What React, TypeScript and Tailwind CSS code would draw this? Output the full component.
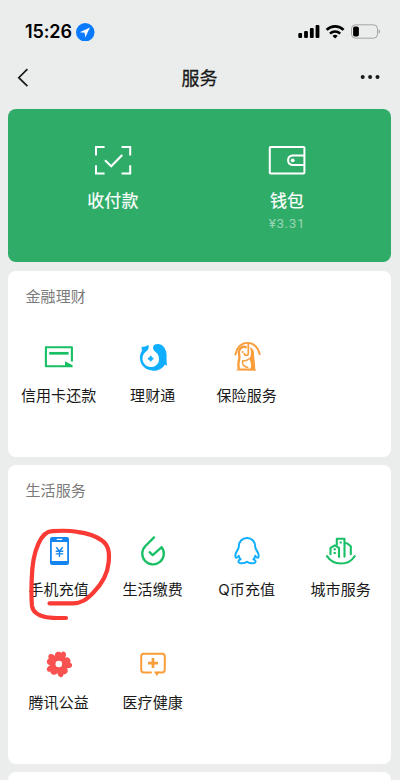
import React from "react";

type IconProps = { children: React.ReactNode };

type Service = {
  name: string;
  icon: React.ReactNode;
};

const Icon = ({ children }: IconProps) => (
  <svg className="block w-9 h-9" viewBox="0 0 36 36" fill="none">
    {children}
  </svg>
);

const CardIcon = () => (
  <Icon>
    <path d="M22 27.2H4.9V8.2H30.9V22.5" stroke="#18bf65" strokeWidth="2.1" strokeLinejoin="round" />
    <path d="M8.2 14.3H27.6" stroke="#18bf65" strokeWidth="2.7" />
    <path d="M24 22.2L31.6 26.2V28.2H21.5V26.2H24Z" fill="#18bf65" />
  </Icon>
);

const WealthIcon = () => (
  <Icon>
    <path
      d="M18.2 7.2C19.6 4.6 24.5 4.4 27.3 6.6C30.6 9.3 32 14 31.6 18.5C31.4 21.8 31.6 24 32.2 26.8L29.9 25.4C27.6 29.4 23.3 31.7 18.4 31.7C10.6 31.7 4.8 26 4.9 18.6C5 16 5.8 13.5 7.2 11.3C6.7 10.2 6.4 9 6.7 7.7C9 7.9 11.2 7.4 13.4 5.7C14.1 8.2 13.6 10.4 11.9 11.8C9.4 13.7 7.5 16 7.5 19.6C7.5 24.4 11 28 15.7 28C20.6 28 24 24.8 24 20.2C24 17.5 23.2 15.2 21.1 13.6C19.2 12 17.4 10 18.2 7.2Z"
      fill="#10aeff"
    />
    <path d="M15.7 17.9V21.5M13.9 19.7H17.5" stroke="#10aeff" strokeWidth="2.2" strokeLinecap="round" />
  </Icon>
);

const InsuranceIcon = () => (
  <Icon>
    <path d="M6.4 15.6C7.6 8.4 12.3 3.9 18.5 3.9C24.6 3.9 29.4 8.4 30.7 15.2" stroke="#fa9d3b" strokeWidth="1.9" strokeLinecap="round" />
    <path d="M17.7 8.3C13.2 6.7 9.9 9.4 9.9 13.6C9.9 16 11 17 10.2 20C9.3 23 9.1 26.4 9.7 30" stroke="#fa9d3b" strokeWidth="2.4" />
    <path d="M19.3 4.5V14.5C19.3 17 15.4 17 15.4 14.5" stroke="#fa9d3b" strokeWidth="1.7" strokeLinecap="round" />
    <path d="M20.6 8C23.8 9.2 25.4 12 25.1 15.3C24.8 18.6 26.4 22 26.2 30.4H21.3C22.5 27 22.1 22.7 20.2 19.8C22.5 16.5 22.6 12 20.6 8Z" fill="#fa9d3b" />
    <path d="M21.8 18.8C18.7 21.4 16.2 22.4 13.7 21.8C12.7 25.2 14.8 28.2 19.3 28.4" stroke="#fa9d3b" strokeWidth="1.5" />
    <path d="M7.2 31.6C8.5 29.2 11.5 29.4 13.3 29.6H23.5C25.2 29.1 26.6 29.8 27 31.7Z" fill="#fa9d3b" />
    <circle cx="13.6" cy="12.9" r="1" fill="#fa9d3b" />
  </Icon>
);

const PhoneIcon = () => (
  <Icon>
    <rect x="9" y="4" width="19" height="28" rx="2.2" fill="#1485ee" />
    <rect x="10.8" y="9" width="15.4" height="19" fill="#fff" />
    <path d="M16.2 6.4H20.8" stroke="#fff" strokeWidth="1.1" strokeLinecap="round" />
    <path d="M15.3 14.2L18.5 18.2L21.7 14.2M14.7 18.3H22.3M14.7 20.9H22.3M18.5 18V24" stroke="#1485ee" strokeWidth="1.4" />
  </Icon>
);

const BillIcon = () => (
  <Icon>
    <path
      d="M19 4.4L10.2 13.2A10.8 10.8 0 1 0 26.7 14.2L17.7 22.1L14.6 19.2"
      stroke="#18bf65"
      strokeWidth="2.3"
      strokeLinecap="round"
      strokeLinejoin="round"
    />
  </Icon>
);

const QCoinIcon = () => (
  <Icon>
    <path
      d="M18 5.1C13 5.1 9.8 8.7 9.8 13.4C9.8 15 9.2 16 8.3 17.4C6.4 20.4 5.9 23.2 6.9 24.7C7.8 25.1 8.8 24.3 9.8 22.8C9.9 24.3 10.7 25.5 11.6 26.3C9.9 26.9 9.2 27.8 9.5 28.8C10.3 30.8 15.6 30.8 18 28.8C20.4 30.8 25.7 30.8 26.5 28.8C26.8 27.8 26.1 26.9 24.4 26.3C25.3 25.5 26.1 24.3 26.2 22.8C27.2 24.3 28.2 25.1 29.1 24.7C30.1 23.2 29.6 20.4 27.7 17.4C26.8 16 26.2 15 26.2 13.4C26.2 8.7 23 5.1 18 5.1Z"
      stroke="#10aeff"
      strokeWidth="2"
      strokeLinejoin="round"
    />
  </Icon>
);

const CityIcon = () => (
  <Icon>
    <g stroke="#18bf65" strokeWidth="2.1" strokeLinecap="round" strokeLinejoin="round">
      <path d="M4 23.2C10.5 33 25.3 33 31.7 23.2" />
      <path d="M7.5 21.3V14.8L11.8 12.4L16 14.8V24" />
      <path d="M13.8 11.8V5.8H21.5V23.6" />
      <path d="M21.8 10.2H24L27.8 13.2V21.2" />
    </g>
    <path d="M10.6 15.3H12.8V17.3H10.6ZM10.6 19H12.8V21H10.6ZM16.6 8.5H18.8V10.5H16.6Z" fill="#18bf65" />
  </Icon>
);

const petals = [-4, 68, 140, 212, 284];

const CharityIcon = () => (
  <Icon>
    {petals.map((angle) => (
      <path
        key={angle}
        d="M17.8 18L22.4 14C24 11.8 26.8 11.2 28.6 12.9C30 14.3 29.9 16.4 29.2 17.8C30.9 18.1 31.3 19.6 30.8 21C29.9 23.2 26.2 23.6 22.6 21.8Z"
        fill="#fa5151"
        transform={`rotate(${angle} 17.8 18)`}
      />
    ))}
    <circle cx="17.8" cy="18" r="3.3" fill="#fff" />
  </Icon>
);

const HealthIcon = () => (
  <Icon>
    <path
      d="M16.8 26.4H8.8C7.2 26.4 6.2 25.4 6.2 23.8V10.4C6.2 8.8 7.2 7.8 8.8 7.8H27.2C28.8 7.8 29.8 8.8 29.8 10.4V23.8C29.8 25.4 28.8 26.4 27.2 26.4H23"
      stroke="#fa9d3b"
      strokeWidth="2"
    />
    <path d="M18.8 25.4H24.2L22 30.2Z" fill="#fa9d3b" />
    <path d="M18 12.1V22.1M13 17.1H23" stroke="#fa9d3b" strokeWidth="2.7" />
  </Icon>
);

const finance: Service[] = [
  { name: "信用卡还款", icon: <CardIcon /> },
  { name: "理财通", icon: <WealthIcon /> },
  { name: "保险服务", icon: <InsuranceIcon /> },
];

const life: Service[] = [
  { name: "手机充值", icon: <PhoneIcon /> },
  { name: "生活缴费", icon: <BillIcon /> },
  { name: "Q币充值", icon: <QCoinIcon /> },
  { name: "城市服务", icon: <CityIcon /> },
  { name: "腾讯公益", icon: <CharityIcon /> },
  { name: "医疗健康", icon: <HealthIcon /> },
];

const StatusBar = () => (
  <div className="h-[62px] pt-0.5 pl-[25px] pr-5 flex items-center justify-between">
    <div className="flex items-center gap-1">
      <span className="font-[Inter,sans-serif] text-[18px] font-semibold leading-none text-black w-[47px] tracking-[-0.1px]">
        15:26
      </span>
      <svg className="w-[18.5px] h-[18.5px]" viewBox="0 0 18 18">
        <circle cx="9" cy="9" r="9" fill="#0a7aff" />
        <path d="M13.6 4.4L3.7 9L8.4 9.6L9 14.2Z" fill="#fff" />
      </svg>
    </div>
    <svg className="w-[83px] h-5 -translate-y-px" viewBox="0 0 83 20">
      <rect x="1.3" y="12" width="3.8" height="5" rx="1" />
      <rect x="7.1" y="10" width="3.8" height="7" rx="1" />
      <rect x="12.9" y="7" width="3.8" height="10" rx="1" />
      <rect x="18.6" y="4" width="3.8" height="13" rx="1" />
      <g fill="none" stroke="#000" strokeWidth="2.6">
        <path d="M29.6 8.9C34.4 4.2 41.8 4.2 46.6 8.9" />
        <path d="M33 12.6C35.9 9.8 40.3 9.8 43.2 12.6" />
      </g>
      <path d="M35.5 14.9C37.1 13.5 39.1 13.5 40.7 14.9L38.1 17.4Z" />
      <rect x="54.5" y="3.8" width="26" height="13.4" rx="4" fill="none" stroke="#a3a5a4" />
      <rect x="56.1" y="5.5" width="5.8" height="10" rx="1.8" />
      <path d="M81.7 8.5C83.2 9.2 83.2 11.8 81.7 12.5Z" fill="#8e908f" />
    </svg>
  </div>
);

const Header = () => (
  <div className="h-[47px] pb-[17px] px-[17px] grid grid-cols-3 items-center">
    <svg className="w-3 h-[19px]" viewBox="0 0 12 19" fill="none">
      <path d="M10.4 1.2L1.8 9.7L10.4 18.2" stroke="#191919" strokeWidth="1.7" />
    </svg>
    <h1 className="-ml-px pt-[3px] text-center text-[18px] leading-none font-normal text-[#191919] [-webkit-text-stroke:0.3px_#191919]">
      服务
    </h1>
    <svg className="w-5 h-4 justify-self-end mr-[3px]" viewBox="0 0 20 4" fill="#191919">
      <circle cx="2.7" cy="2" r="2" />
      <circle cx="10.1" cy="2" r="2" />
      <circle cx="17.5" cy="2" r="2" />
    </svg>
  </div>
);

const PayCard = () => (
  <div className="h-[153px] rounded-lg bg-[#2eac68] px-[18px] grid grid-cols-2 text-white text-[17px]">
    <div className="flex flex-col items-center pt-[31px]">
      <svg className="w-10 h-10" viewBox="0 0 40 40" fill="none" stroke="#fff" strokeWidth="2">
        <path d="M11.6 7H3V15.4M28.6 7H37.2V15.4M11.6 33.6H3V25.2M28.6 33.6H37.2V25.2" />
        <path d="M12 20.2L18.2 26.3L29.2 14.9" strokeWidth="2.1" />
      </svg>
      <span className="mt-[9px] leading-[25px] tracking-[0.2px] [-webkit-text-stroke:0.2px_#fff]">收付款</span>
    </div>
    <div className="flex flex-col items-center pt-[31px] pl-px">
      <svg className="w-10 h-10" viewBox="0 0 40 40" fill="none" stroke="#fff" strokeWidth="2">
        <rect x="2.8" y="7" width="34.6" height="26.6" rx="0.8" />
        <path d="M37 15.6H25.2A4.8 4.8 0 0 0 25.2 25.1H37" />
        <circle cx="25.7" cy="20.3" r="1.9" fill="#fff" stroke="none" />
      </svg>
      <span className="mt-[9px] leading-[25px] [-webkit-text-stroke:0.2px_#fff]">钱包</span>
      <span className="font-[Roboto,sans-serif] text-[13.5px] leading-[19px] tracking-[0.6px] text-white/50">¥3.31</span>
    </div>
  </div>
);

type SectionProps = {
  title: string;
  items: Service[];
};

const Section = ({ title, items }: SectionProps) => (
  <section className="rounded-lg bg-white pt-[15px] px-[3.5px] pb-[41px]">
    <h2 className="pl-[13.8px] text-[15px] leading-[22px] tracking-[0.1px] text-[#7b7b7b]">{title}</h2>
    <div className="mt-[31px] grid grid-cols-4 gap-y-[36px]">
      {items.map((item) => (
        <div key={item.name} className="h-[77px] flex flex-col items-center">
          {item.icon}
          <span className="mt-[10px] text-[15px] leading-[22px] tracking-[0.1px] whitespace-nowrap text-[#191919]">
            {item.name}
          </span>
        </div>
      ))}
    </div>
  </section>
);

const App = () => {
  return (
    <div className="relative h-[780px] w-[400px] overflow-hidden bg-[#ebedec] font-[Inter,'Noto_Sans_CJK_SC',sans-serif]">
      <StatusBar />
      <Header />
      <main className="pl-[8.2px] pr-[8.8px] flex flex-col">
        <PayCard />
        <div className="mt-[9px] flex flex-col gap-2">
          <Section title="金融理财" items={finance} />
          <Section title="生活服务" items={life} />
          <div className="h-10 rounded-lg bg-white" />
        </div>
      </main>
      <svg className="absolute left-5 top-[520px] w-[100px] h-[110px]" viewBox="20 520 100 110" fill="none">
        <path
          d="M66 618C58 618 52 618.2 46.7 617.2C39 615.8 33 613 32 606C31 595 31.5 588 31.7 580C32 566 33.5 554 38.5 543.5C42 536 46 531.5 52 531.2C60 530.6 70 530.6 77 531.8C87 533 96 536 102 540.5C109 545.5 109.5 553 108.7 562C107.5 576 100 586 93 593C86 600 81 603.3 73 603.3H49.5"
          stroke="#fa3a35"
          strokeWidth="4.2"
          strokeLinecap="round"
          strokeLinejoin="round"
        />
      </svg>
    </div>
  );
};

export default App;
